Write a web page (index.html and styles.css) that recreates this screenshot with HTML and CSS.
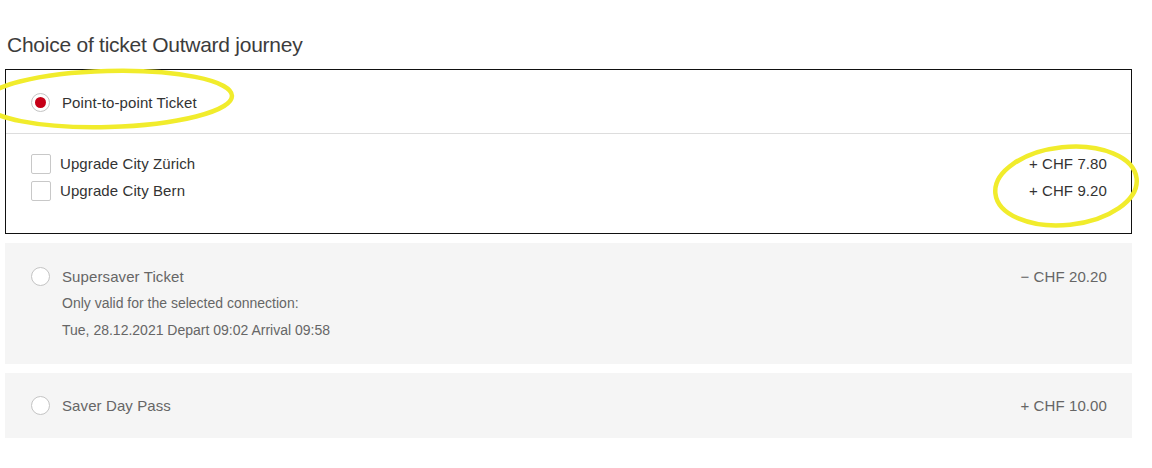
FILE: index.html
```html
<!DOCTYPE html>
<html lang="en">
<head>
<meta charset="utf-8">
<title>Choice of ticket</title>
<link rel="stylesheet" href="styles.css">
</head>
<body>
<main class="page">
  <h2 class="title">Choice of ticket Outward journey</h2>

  <section class="offer offer--selected">
    <div class="offer-head">
      <span class="radio radio--checked"><span class="radio-dot"></span></span>
      <span class="offer-name">Point-to-point Ticket</span>
    </div>
    <div class="upgrades">
      <div class="upgrade">
        <span class="checkbox"></span>
        <span class="upgrade-name">Upgrade City Zürich</span>
        <span class="price">+ CHF 7.80</span>
      </div>
      <div class="upgrade">
        <span class="checkbox"></span>
        <span class="upgrade-name">Upgrade City Bern</span>
        <span class="price">+ CHF 9.20</span>
      </div>
    </div>
  </section>

  <section class="offer offer--muted">
    <div class="offer-row offer-row--tall">
      <span class="radio"></span>
      <div class="offer-body">
        <div class="offer-name">Supersaver Ticket</div>
        <div class="offer-note">Only valid for the selected connection:</div>
        <div class="offer-note">Tue, 28.12.2021 Depart 09:02 Arrival 09:58</div>
      </div>
      <span class="price">− CHF 20.20</span>
    </div>
  </section>

  <section class="offer offer--muted">
    <div class="offer-row">
      <span class="radio"></span>
      <div class="offer-body">
        <div class="offer-name">Saver Day Pass</div>
      </div>
      <span class="price">+ CHF 10.00</span>
    </div>
  </section>

  <svg class="marks" width="1152" height="468" viewBox="0 0 1152 468" aria-hidden="true">
    <ellipse cx="108" cy="99" rx="124" ry="28" transform="rotate(-1.5 108 99)"/>
    <ellipse cx="1066" cy="186" rx="71" ry="39" transform="rotate(-6 1066 186)"/>
  </svg>
</main>
</body>
</html>
```

FILE: styles.css
```css
* { box-sizing: border-box; }

html, body {
  margin: 0;
  padding: 0;
  background: #fff;
}

body {
  font-family: "Liberation Sans", Arial, Helvetica, sans-serif;
  color: #333;
  width: 1152px;
  height: 468px;
  overflow: hidden;
}

.page {
  position: relative;
  padding: 33px 20px 0 5px;
  width: 1152px;
  height: 468px;
}

.title {
  margin: 0 0 12px 2px;
  font-family: "Liberation Sans", Arial, sans-serif;
  font-weight: 400;
  font-size: 21px;
  line-height: 24px;
  color: #3c3c3c;
  letter-spacing: -0.25px;
}

.offer {
  width: 1127px;
  margin-bottom: 9px;
  font-size: 15px;
  letter-spacing: 0.1px;
}

.offer--selected {
  border: 1px solid #111;
  background: #fff;
}

.offer-head {
  display: flex;
  align-items: center;
  padding: 19px 24px 18px;
  height: 64px;
  border-bottom: 1px solid #ddd;
}

.radio {
  flex: none;
  width: 19px;
  height: 19px;
  border: 1px solid #c4c4c4;
  border-radius: 50%;
  background: #fff;
  display: flex;
  align-items: center;
  justify-content: center;
}

.radio-dot {
  width: 11px;
  height: 11px;
  border-radius: 50%;
  background: #c60018;
}

.offer-head .radio { margin-left: 1px; }

.offer-name {
  margin-left: 12px;
  line-height: 27px;
}

.upgrades {
  padding: 16px 24px 29px 25px;
}

.upgrade {
  display: flex;
  align-items: center;
  height: 27px;
}

.checkbox {
  flex: none;
  width: 20px;
  height: 20px;
  border: 1px solid #c8c8c8;
  border-radius: 2px;
  background: #fff;
}

.upgrade-name {
  margin-left: 9px;
  flex: 1;
}

.price {
  margin-left: auto;
  white-space: nowrap;
}

.offer--muted {
  background: #f5f5f5;
  color: #666;
}

.offer-row {
  display: flex;
  align-items: flex-start;
  height: 65px;
  padding: 19px 25px 19px 26px;
}

.offer-row--tall {
  height: 121px;
  padding-top: 20px;
  padding-bottom: 20px;
}

.offer-row .radio {
  margin-top: 4px;
}

.offer-row .price {
  line-height: 27px;
}

.offer-body {
  flex: 1;
}

.offer-body .offer-name {
  margin-left: 12px;
}

.offer-note {
  margin-left: 12px;
  font-size: 14px;
  line-height: 27px;
  letter-spacing: 0;
}

.marks {
  position: absolute;
  left: 0;
  top: 0;
  pointer-events: none;
}

.marks ellipse {
  fill: none;
  stroke: #f1ec2c;
  stroke-width: 4.5;
}
```
